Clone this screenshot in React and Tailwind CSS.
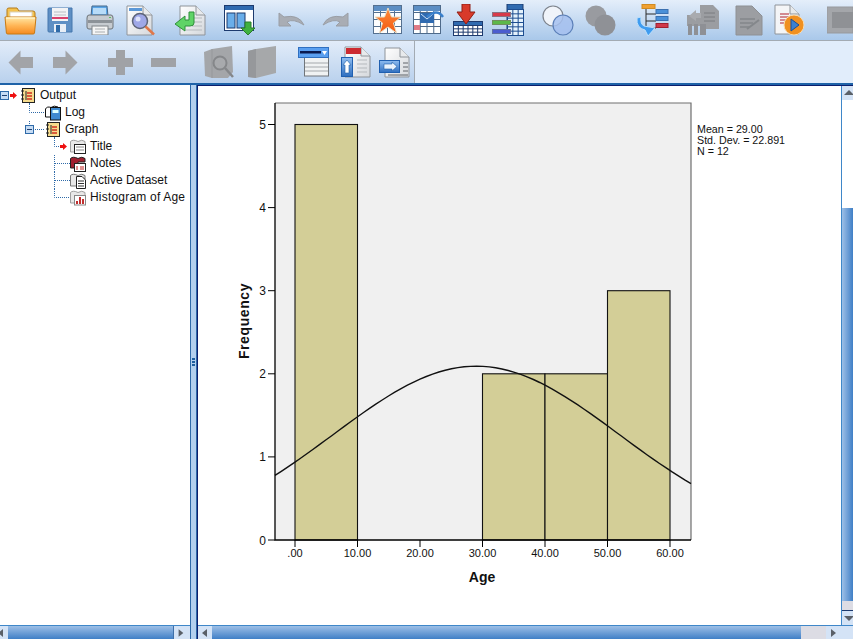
import React from "react";

const Svg = ({ w, h, className = "", children }) => (
  <svg width={w} height={h} viewBox={`0 0 ${w} ${h}`} className={`shrink-0 block ${className}`}>{children}</svg>
);

const Defs = () => (
  <svg width="0" height="0" className="block h-0 w-0">
    <defs>
      <linearGradient id="fold" x1="0" y1="0" x2="0" y2="1"><stop offset="0" stopColor="#ffe9a8" /><stop offset="0.5" stopColor="#ffb657" /><stop offset="1" stopColor="#f58a1f" /></linearGradient>
      <linearGradient id="blue" x1="0" y1="0" x2="0" y2="1"><stop offset="0" stopColor="#8fbdf0" /><stop offset="1" stopColor="#2f6fc0" /></linearGradient>
      <linearGradient id="paper" x1="0" y1="0" x2="1" y2="1"><stop offset="0" stopColor="#ffffff" /><stop offset="1" stopColor="#d5d8dc" /></linearGradient>
      <linearGradient id="star" x1="0" y1="0" x2="0" y2="1"><stop offset="0" stopColor="#ff8a3a" /><stop offset="1" stopColor="#f25a10" /></linearGradient>
    </defs>
  </svg>
);

const Doc = ({ x = 0, y = 0, w, h, fold = 9, fill = "url(#paper)", stroke = "#8f949a" }) => (
  <g>
    <path d={`M${x} ${y}H${x + w - fold}L${x + w} ${y + fold}V${y + h}H${x}Z`} fill={fill} stroke={stroke} />
    <path d={`M${x + w - fold} ${y}V${y + fold}H${x + w}`} fill="#e8eaec" stroke={stroke} />
  </g>
);

const GridRect = ({ x, y, w, h, cols, rows, stroke = "#1f3f80", fill = "#fff" }) => {
  const v = [], hz = [];
  for (let i = 1; i < cols; i++) v.push(x + (w * i) / cols);
  for (let i = 1; i < rows; i++) hz.push(y + (h * i) / rows);
  return (
    <g>
      <rect x={x} y={y} width={w} height={h} fill={fill} stroke={stroke} />
      {v.map((a) => <line key={a} x1={a} x2={a} y1={y} y2={y + h} stroke={stroke} />)}
      {hz.map((a) => <line key={a} y1={a} y2={a} x1={x} x2={x + w} stroke={stroke} />)}
    </g>
  );
};

const OpenIcon = ({ className }) => (
  <Svg w={33} h={29} className={className}>
    <path d="M3 7V3.5Q3 2 5 2H13L15 5H29Q31 5 31 7V12H3Z" fill="#f4c24f" stroke="#b47a1a" />
    <rect x="6" y="6" width="22" height="6" fill="#fff" stroke="#d9d2bd" />
    <path d="M1 11H32L30.5 27Q30.4 28 29 28H4Q2.5 28 2.4 27Z" fill="url(#fold)" stroke="#c87a14" />
    <path d="M2 12H31" stroke="#fff3c8" strokeWidth="1.5" />
  </Svg>
);
const SaveIcon = ({ className }) => (
  <Svg w={26} h={26} className={className}>
    <path d="M1 2Q1 1 2 1H25V25H2Q1 25 1 24Z" fill="#5e8fc4" stroke="#4577ad" />
    <rect x="5" y="1" width="16" height="13" fill="#f2f3f5" />
    <path d="M7 5H19M7 8H19" stroke="#b9bec4" />
    <rect x="5" y="10" width="16" height="2" fill="#d9436d" />
    <rect x="7" y="17" width="12" height="8" fill="#e8eef6" />
    <rect x="9" y="18" width="4" height="7" fill="#2f6aa8" />
  </Svg>
);
const PrintIcon = ({ className }) => (
  <Svg w={28} h={30} className={className}>
    <path d="M6 1H21L22 11H5Z" fill="#5aa6e8" stroke="#46688a" />
    <path d="M7 3H20V9H7Z" fill="#b8dcf8" />
    <path d="M3 10H25Q27 10 27 13V22Q27 24 25 24H3Q1 24 1 22V13Q1 10 3 10Z" fill="#c6cbd0" stroke="#6d7378" />
    <rect x="2" y="15" width="24" height="3" fill="#8c9298" />
    <rect x="23" y="12" width="2" height="1" fill="#5fbf5f" />
    <rect x="6" y="21" width="16" height="9" fill="#f5f5f5" stroke="#7f8488" />
    <path d="M9 24H19M9 27H19" stroke="#a9adb0" />
  </Svg>
);
const PreviewIcon = ({ className }) => (
  <Svg w={30} h={31} className={className}>
    <Doc x={1} y={1} w={25} h={29} />
    <rect x="3" y="3" width="13" height="3" fill="#5b98d8" />
    <circle cx="14" cy="16" r="7.5" fill="#9fa8e8" stroke="#5d6478" strokeWidth="1.5" />
    <circle cx="12" cy="14" r="2.5" fill="#dfe3fa" />
    <path d="M19.5 21.5L28 29.5" stroke="#e0774a" strokeWidth="2.5" />
  </Svg>
);
const GotoIcon = ({ className }) => (
  <Svg w={32} h={31} className={className}>
    <Doc x={6} y={1} w={25} h={29} />
    <path d="M18 13H28M18 17H28M18 21H28M12 25H28" stroke="#b5b9bd" />
    <path d="M15 7H20V18Q20 21 16 21H11V26L1 19L11 11V15H15Z" fill="#5fd466" stroke="#2f8f3a" />
  </Svg>
);
const PanelIcon = ({ className }) => (
  <Svg w={31} h={30} className={className}>
    <rect x="0.5" y="0.5" width="29" height="25" fill="#fff" stroke="#1d3a6e" />
    <rect x="1" y="1" width="28" height="4" fill="#2f6ab0" />
    <rect x="3" y="8" width="8" height="15" fill="#6aaeea" stroke="#1d3a6e" />
    <rect x="13" y="8" width="8" height="15" fill="#6aaeea" stroke="#1d3a6e" />
    <path d="M21 17H27V23H31L24 30L17 23H21Z" fill="#3fb13f" stroke="#2a7a2a" />
  </Svg>
);
const UndoIcon = ({ className, flip }) => (
  <Svg w={27} h={16} className={className}>
    <g transform={flip ? "translate(27 0) scale(-1 1)" : undefined}>
      <path d="M1 1V14H13L9 10Q15 6 26 13Q21 2 6 5L1 1Z" fill="#a9adb4" stroke="#9a9ea5" />
    </g>
  </Svg>
);
const StarIcon = ({ className }) => (
  <Svg w={30} h={30} className={className}>
    <GridRect x={0.5} y={0.5} w={28} h={28} cols={4} rows={4} stroke="#55708f" fill="#fdfdfd" />
    <rect x="1" y="1" width="27" height="5" fill="#5c8ec4" />
    <path d="M15 3L18.5 12H28L20.5 18L23.5 28L15 22L6.5 28L9.5 18L2 12H11.5Z" fill="url(#star)" stroke="#e8e0c8" />
  </Svg>
);
const GraphTableIcon = ({ className }) => (
  <Svg w={31} h={30} className={className}>
    <GridRect x={0.5} y={0.5} w={27} h={28} cols={4} rows={4} stroke="#4e6a8a" />
    <rect x="1" y="1" width="26" height="5" fill="#5c8ec4" />
    <rect x="1" y="20" width="6" height="5" fill="#e07a85" />
    <rect x="7" y="8" width="14" height="10" fill="#2f6ab0" />
    <path d="M8 9L14 14L20 9" stroke="#cfe4fa" fill="none" />
    <path d="M14 12Q24 3 30 12" stroke="#3a80cc" strokeWidth="2.5" fill="none" />
  </Svg>
);
const InsertIcon = ({ className }) => (
  <Svg w={30} h={32} className={className}>
    <rect x="0.5" y="17.5" width="29" height="14" fill="#2f6ab0" stroke="#1d3a6e" />
    <GridRect x={0.5} y={21.5} w={29} h={10} cols={6} rows={3} stroke="#1d3a6e" />
    <path d="M9 0H17V8H22L13 20L4 8H9Z" fill="#d83a2a" stroke="#8f1f14" />
  </Svg>
);
const VarIcon = ({ className }) => (
  <Svg w={32} h={32} className={className}>
    <rect x="15" y="0" width="16" height="31" fill="#2f6ab0" stroke="#1d3a6e" />
    <GridRect x={15.5} y={5.5} w={16} h={26} cols={3} rows={6} stroke="#1d4d90" fill="#e4f2fc" />
    <rect x="0.5" y="8.5" width="18" height="4" fill="#d83a4a" stroke="#8c7080" />
    <rect x="0.5" y="16.5" width="18" height="4" fill="#5cb84a" stroke="#6f9060" />
    <rect x="0.5" y="25.5" width="18" height="4" fill="#4a5ccf" stroke="#6070a0" />
  </Svg>
);
const CirclesIcon = ({ className }) => (
  <Svg w={32} h={31} className={className}>
    <circle cx="11" cy="11" r="10" fill="#f0f4fa" stroke="#7d838c" strokeWidth="1.2" />
    <circle cx="21" cy="20" r="10" fill="#a4c0ee" fillOpacity="0.85" stroke="#5b7fb8" strokeWidth="1.2" />
  </Svg>
);
const GrayCirclesIcon = ({ className }) => (
  <Svg w={31} h={31} className={className}>
    <circle cx="11" cy="11" r="10.5" fill="#999ba0" />
    <circle cx="20" cy="20" r="10.5" fill="#8f9196" />
  </Svg>
);
const TreeIcon = ({ className }) => (
  <Svg w={33} h={32} className={className}>
    <rect x="6" y="0.5" width="13" height="4" fill="#f0a030" stroke="#d08a20" />
    <path d="M10 5V24M10 10H20M10 17H20M10 24H20" stroke="#2a2a2a" fill="none" />
    <rect x="20" y="5.5" width="12" height="4" fill="#4a90d8" stroke="#3a70b0" />
    <rect x="20" y="12.5" width="12" height="4" fill="#4a90d8" stroke="#3a70b0" />
    <rect x="20" y="19.5" width="12" height="4" fill="#d0384a" stroke="#a02030" />
    <path d="M1 14Q0 24 9 26L12 32L19 24L8 22Q4 20 5 13Z" fill="#3f9cf0" stroke="#bfe0fa" />
  </Svg>
);
const GrayA = ({ className }) => (
  <Svg w={32} h={32} className={className}>
    <path d="M13 1H26L32 7V25H14V22H0V11H13Z" fill="#9b9da1" />
    <rect x="1" y="20" width="4" height="11" fill="#8e9095" />
    <rect x="7" y="20" width="4" height="11" fill="#8e9095" />
    <rect x="13" y="20" width="6" height="11" fill="#8e9095" />
    <path d="M17 9H28M17 13H28M17 17H28" stroke="#7a7c80" />
    <path d="M2 12L9 6V9H14V14H9V17Z" fill="#a9abaf" />
  </Svg>
);
const GrayB = ({ className }) => (
  <Svg w={28} h={31} className={className}>
    <path d="M1 1H17L27 11V30H1Z" fill="#9c9ea2" stroke="#8e9094" />
    <path d="M5 14H20M5 18H18M5 22H14" stroke="#777a7e" />
    <path d="M12 24L24 15" stroke="#84878b" strokeWidth="2" />
  </Svg>
);
const PlayDocIcon = ({ className }) => (
  <Svg w={31} h={32} className={className}>
    <Doc x={1} y={1} w={24} h={29} fill="#f4f5f7" />
    <path d="M6 10H15M6 13H15M6 16H13M6 19H13" stroke="#b0202c" strokeWidth="1.2" />
    <circle cx="20" cy="21" r="10" fill="#f09020" stroke="#f8dcb0" />
    <path d="M17 15L25 21L17 27Z" fill="#3a80d0" stroke="#1d4d90" />
  </Svg>
);
const GrayFrame = ({ className }) => (
  <Svg w={26} h={28} className={className}>
    <rect x="0" y="1" width="26" height="26" fill="#a4a6aa" stroke="#97999d" />
    <rect x="5" y="6" width="21" height="16" fill="#8f9195" />
  </Svg>
);

const BackIcon = ({ className, flip }) => (
  <Svg w={25} h={25} className={className}>
    <g transform={flip ? "translate(25 0) scale(-1 1)" : undefined}>
      <path d="M12.5 0.5V7H25V18H12.5V24.5L0.5 12.5Z" fill="#a2a4a8" />
    </g>
  </Svg>
);
const PlusIcon = ({ className }) => (
  <Svg w={25} h={25} className={className}>
    <path d="M8 0H17V8H25V17H17V25H8V17H0V8H8Z" fill="#a0a2a6" />
  </Svg>
);
const MinusIcon = ({ className }) => (
  <Svg w={25} h={25} className={className}>
    <rect x="0" y="8" width="25" height="9" fill="#a0a2a6" />
  </Svg>
);
const GrayPreview = ({ className }) => (
  <Svg w={31} h={33} className={className}>
    <path d="M0 6L8 3L28 0L29 26L24 32L8 32L1 30Z" fill="#a4a6a9" />
    <path d="M8 3V32" stroke="#96989b" />
    <circle cx="16" cy="17" r="6.5" fill="#a8aaad" stroke="#85878a" strokeWidth="2" />
    <path d="M21 22L29 31" stroke="#85878a" strokeWidth="2.5" />
  </Svg>
);
const GrayBox = ({ className }) => (
  <Svg w={29} h={33} className={className}>
    <path d="M0 5L8 3L28 0V27L8 32L0 31Z" fill="#a6a8aa" />
    <path d="M0 5L8 3V32L0 31Z" fill="#96989b" />
  </Svg>
);
const DropIcon = ({ className }) => (
  <Svg w={31} h={30} className={className}>
    <rect x="6.5" y="8.5" width="24" height="20.5" fill="#f0f2f3" stroke="#70757a" />
    <path d="M7 16H30M7 20H30M7 24H30" stroke="#a4a8ac" />
    <rect x="0.5" y="0.5" width="30" height="10" fill="#5a9ff0" stroke="#2f6fc0" />
    <rect x="2" y="4" width="21" height="2.5" fill="#0a1a50" />
    <path d="M24 4H29L26.5 8Z" fill="#fff" />
  </Svg>
);
const DocUpIcon = ({ className }) => (
  <Svg w={30} h={32} className={className}>
    <Doc x={4} y={1} w={25} h={30} />
    <rect x="5" y="2" width="15" height="6" fill="#cc2a30" />
    <path d="M16 14H26M16 18H26M16 22H26M16 26H26" stroke="#b5b9bd" />
    <rect x="0.5" y="11.5" width="11" height="19" fill="url(#blue)" stroke="#2060b0" />
    <path d="M6 14L10 19H8V27H4V19H2Z" fill="#fff" stroke="#1f5fa8" strokeWidth="0.6" />
  </Svg>
);
const DocRightIcon = ({ className }) => (
  <Svg w={31} h={31} className={className}>
    <Doc x={6} y={1} w={24} h={29} />
    <path d="M24 16H29M24 20H29M24 24H29M9 28H29" stroke="#60646a" />
    <rect x="0.5" y="13.5" width="20" height="12" fill="url(#blue)" stroke="#2060b0" />
    <path d="M5 17H13V15L18 19.5L13 24V22H5Z" fill="#e8f2fc" stroke="#1f5fa8" strokeWidth="0.6" />
  </Svg>
);

const Expander = ({ x, y }) => (
  <g>
    <rect x={x + 0.5} y={y + 0.5} width="8" height="8" fill="#c6dcf4" stroke="#2f6aa8" />
    <line x1={x + 2} x2={x + 7} y1={y + 4.5} y2={y + 4.5} stroke="#1f3f70" />
  </g>
);
const RedArrow = ({ x }) => (
  <path d={`M${x} 7H${x + 3}V5L${x + 7} 8.5L${x + 3} 12V10H${x}Z`} fill="#ee1111" />
);
const Dots = ({ d }) => <path d={d} stroke="#2f6aa8" strokeDasharray="1 1" fill="none" />;
const BookYellow = ({ x }) => (
  <g>
    <rect x={x + 1.5} y="1.5" width="12" height="14" fill="#f6dc8e" stroke="#222" />
    <path d={`M${x} 4H${x + 3}M${x} 8H${x + 3}M${x} 12H${x + 3}`} stroke="#222" />
    <path d={`M${x + 6} 6H${x + 11}M${x + 6} 9H${x + 11}M${x + 6} 12H${x + 11}`} stroke="#d03020" strokeWidth="1.5" />
    <path d={`M${x + 5} 4V13`} stroke="#222" />
  </g>
);
const BookBase = ({ x, tone = "#a0a0a0" }) => (
  <path d={`M${x + 0.5} 14V3.5Q${x + 3} 1 ${x + 8} 3.5Q${x + 12} 1 ${x + 15} 3.5V7H${x + 8}V14Z`} fill="#e8e8e8" stroke={tone} />
);

const Row = ({ w, label, wide, children }) => (
  <div className="flex h-[17px] items-center">
    <svg width={w} height="17" viewBox={`0 0 ${w} 17`} className="block shrink-0">{children}</svg>
    <span className={`whitespace-nowrap text-[12px] leading-[17px] text-[#111] ${wide ? "tracking-[0.2px]" : ""}`}>{label}</span>
  </div>
);

const Tree = () => (
  <div className="flex min-h-0 flex-1 flex-col bg-white pt-[2px]">
    <Row w={40} label="Output">
      <Expander x={0} y={4} />
      <RedArrow x={10} />
      <BookYellow x={21} />
      <Dots d="M29.5 16V17" />
    </Row>
    <Row w={65} label="Log">
      <Dots d="M29.5 0V8.5H44" />
      <path d="M45.5 13V5Q47 2 51 3.5Q54 1 58 3V13Z" fill="#fff" stroke="#111" />
      <rect x="50.5" y="3.5" width="10" height="12.5" fill="#3f8ad0" stroke="#111" />
      <rect x="52.5" y="6" width="6" height="3" fill="#dff" />
    </Row>
    <Row w={65} label="Graph">
      <Dots d="M29.5 0V4M33 8.5H45" />
      <Expander x={25} y={4} />
      <BookYellow x={46} />
      <Dots d="M54.5 16V17" />
    </Row>
    <Row w={90} label="Title">
      <Dots d="M54.5 0V8.5H60" />
      <RedArrow x={60} />
      <BookBase x={70} />
      <rect x="74.5" y="6.5" width="11" height="9" fill="#fff" stroke="#222" />
      <path d="M76 9H84M76 12H84" stroke="#888" />
    </Row>
    <Row w={90} label="Notes">
      <Dots d="M54.5 0V17M55 8.5H70" />
      <path d="M70.5 13V3.5Q73 1 78 3.5Q82 1 85 3.5V7H78V13Z" fill="#a02030" stroke="#222" />
      <rect x="74.5" y="8.5" width="11" height="8" fill="#fff" stroke="#222" />
      <path d="M77 11V15M80 12H84M80 14H84" stroke="#c02020" />
    </Row>
    <Row w={90} label="Active Dataset">
      <Dots d="M54.5 0V17M55 8.5H70" />
      <BookBase x={70} tone="#777" />
      <path d="M76.5 4.5H82L85.5 8V16.5H76.5Z" fill="#fff" stroke="#222" />
      <path d="M78 9H84M78 11.5H84M78 14H84" stroke="#333" />
    </Row>
    <Row w={90} label="Histogram of Age" wide>
      <Dots d="M54.5 0V8.5H70" />
      <BookBase x={70} />
      <rect x="74.5" y="6.5" width="11" height="9.5" fill="#fff" stroke="#888" />
      <path d="M76 15V12H78V15ZM79 15V8H81V15ZM82 15V10H84V15Z" fill="#c03030" />
    </Row>
  </div>
);

const ArrowBtn = ({ dir, className }) => {
  const d = { l: "M9 3V11L4 7Z", r: "M5 3V11L10 7Z", u: "M7 4L12 9H2Z", d: "M2 5H12L7 10Z" }[dir];
  return (
    <svg width="14" height="14" viewBox="0 0 14 14" className={`block shrink-0 ${className || ""}`}>
      <rect width="14" height="14" fill="#d4e3f6" />
      <path d={d} fill="#5a6068" />
    </svg>
  );
};

const xOf = (v) => 295 + 6.25 * v;
const yOf = (f) => 540 - 83.1 * f;
const curve = (() => {
  const pts = [];
  for (let i = 0; i <= 66; i++) {
    const v = -3.2 + (66.56 * i) / 66;
    const f = (12 * 10) / (22.891 * Math.sqrt(2 * Math.PI)) * Math.exp(-((v - 29) ** 2) / (2 * 22.891 ** 2));
    pts.push(`${xOf(v).toFixed(1)},${yOf(f).toFixed(1)}`);
  }
  return pts.join(" ");
})();

const Chart = () => {
  const bars = [[0, 5], [30, 2], [40, 2], [50, 3]];
  return (
    <svg width="643" height="539" viewBox="198 86 643 539" className="block shrink-0" fontFamily="'Liberation Sans', Arial, sans-serif">
      <rect x="275" y="103" width="416" height="437" fill="#f0f0f0" />
      <path d="M275 103H691V540" fill="none" stroke="#6e6e6e" strokeWidth="1.2" />
      {bars.map(([v, f]) => (
        <rect key={v} x={xOf(v)} y={yOf(f)} width="62.5" height={83.1 * f} fill="#d3ce97" stroke="#111" strokeWidth="1.1" />
      ))}
      <polyline points={curve} fill="none" stroke="#111" strokeWidth="1.4" />
      <path d="M275 103V540H691" fill="none" stroke="#000" strokeWidth="1.3" />
      {[0, 1, 2, 3, 4, 5].map((f) => (
        <g key={f}>
          <line x1="268" x2="275" y1={yOf(f)} y2={yOf(f)} stroke="#000" />
          <text x="266" y={yOf(f) + 4.5} textAnchor="end" fontSize="12" fill="#111">{f}</text>
        </g>
      ))}
      {[[0, ".00"], [10, "10.00"], [20, "20.00"], [30, "30.00"], [40, "40.00"], [50, "50.00"], [60, "60.00"]].map(([v, t]) => (
        <g key={v}>
          <line x1={xOf(v)} x2={xOf(v)} y1="540" y2="547" stroke="#000" />
          <text x={xOf(v)} y="557" textAnchor="middle" fontSize="11" fill="#111">{t}</text>
        </g>
      ))}
      <text x="482" y="582" textAnchor="middle" fontSize="14" fontWeight="700" fill="#111">Age</text>
      <text transform="translate(249 321) rotate(-90)" textAnchor="middle" fontSize="14" letterSpacing="0.6" fontWeight="700" fill="#111">Frequency</text>
      <text fontSize="10.7" fill="#111">
        <tspan x="697" y="133">Mean = 29.00</tspan>
        <tspan x="697" y="144">Std. Dev. = 22.891</tspan>
        <tspan x="697" y="155">N = 12</tspan>
      </text>
    </svg>
  );
};

export default function App() {
  return (
    <div className="flex h-[639px] w-[853px] flex-col overflow-hidden bg-white font-['Liberation_Sans',Arial,sans-serif]">
      <Defs />
      <div className="flex h-[41px] shrink-0 items-center border-b border-[#a3abb3] bg-gradient-to-b from-[#e4eefa] to-[#a9c8ea]">
        <OpenIcon className="ml-[4px]" />
        <SaveIcon className="ml-[10px]" />
        <PrintIcon className="ml-[13px]" />
        <PreviewIcon className="ml-[12px]" />
        <GotoIcon className="ml-[18px]" />
        <PanelIcon className="ml-[18px]" />
        <UndoIcon className="ml-[23px]" />
        <UndoIcon flip className="ml-[17px]" />
        <StarIcon className="ml-[24px]" />
        <GraphTableIcon className="ml-[10px]" />
        <InsertIcon className="ml-[9px]" />
        <VarIcon className="ml-[9px]" />
        <CirclesIcon className="ml-[18px]" />
        <GrayCirclesIcon className="ml-[11px]" />
        <TreeIcon className="ml-[20px]" />
        <GrayA className="ml-[18px]" />
        <GrayB className="ml-[16px]" />
        <PlayDocIcon className="ml-[11px]" />
        <GrayFrame className="ml-[22px]" />
      </div>
      <div className="flex h-[44px] shrink-0 border-b-2 border-[#1f63a8] bg-[#e1edfb]">
        <div className="flex w-[415px] items-center border-r border-[#a3abb3] bg-gradient-to-b from-[#e2ecf9] to-[#b9d1ed]">
          <BackIcon className="ml-[8px]" />
          <BackIcon flip className="ml-[20px]" />
          <PlusIcon className="ml-[30px]" />
          <MinusIcon className="ml-[18px]" />
          <GrayPreview className="ml-[28px]" />
          <GrayBox className="ml-[13px]" />
          <DropIcon className="ml-[21px]" />
          <DocUpIcon className="ml-[12px]" />
          <DocRightIcon className="ml-[8px]" />
        </div>
      </div>
      <div className="flex min-h-0 flex-1">
        <div className="flex w-[190px] shrink-0 flex-col">
          <Tree />
          <div className="flex h-[14px] shrink-0 border-t border-[#3f87c9] bg-[#d4e3f6]">
            <div className="w-[8px] overflow-hidden"><ArrowBtn dir="l" className="-ml-[6px]" /></div>
            <div className="w-[165px] bg-gradient-to-b from-[#9dbfe6] to-[#3f7fc6]" />
            <ArrowBtn dir="r" className="border-l border-[#3f6fa8]" />
          </div>
        </div>
        <div className="flex w-[7px] shrink-0 flex-col items-center justify-center gap-[1px] border-x border-[#2f6aa8] bg-[#b3d0ee]">
          <span className="h-[2px] w-[3px] bg-[#1f5f9f]" />
          <span className="h-[2px] w-[3px] bg-[#1f5f9f]" />
          <span className="h-[2px] w-[3px] bg-[#1f5f9f]" />
        </div>
        <div className="flex min-w-0 flex-1 flex-col border-l border-t border-[#0c1f6e]">
          <div className="flex min-h-0 flex-1">
            <Chart />
            <div className="flex w-[12px] shrink-0 flex-col border-l border-[#3f87c9]">
              <ArrowBtn dir="u" />
              <div className="h-[108px] shrink-0 bg-white" />
              <div className="flex-1 bg-gradient-to-r from-[#9dbfe6] to-[#3f7fc6]" />
              <div className="h-[10px] shrink-0 border-b border-[#1d3a6e] bg-[#dcdce4]" />
              <ArrowBtn dir="d" />
            </div>
          </div>
          <div className="flex h-[14px] shrink-0 border-t border-[#3f87c9]">
            <ArrowBtn dir="l" />
            <div className="flex-1 bg-gradient-to-b from-[#9dbfe6] to-[#3f7fc6]" />
            <div className="w-[25px] bg-[#dcdce4]" />
            <ArrowBtn dir="r" />
            <div className="w-[13px] bg-[#d4e3f6]" />
          </div>
        </div>
      </div>
    </div>
  );
}
